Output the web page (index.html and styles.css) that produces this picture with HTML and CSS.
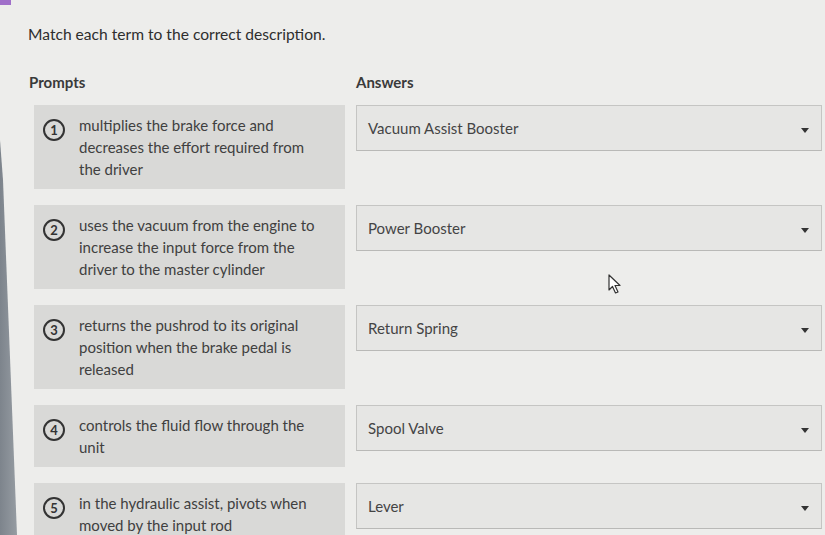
FILE: index.html
```html
<!DOCTYPE html>
<html lang="en">
  <head>
    <meta charset="UTF-8" />
    <meta name="viewport" content="width=device-width, initial-scale=1.0" />
    <title>Matching Question</title>
    <link rel="stylesheet" href="styles.css">
  </head>
  <body>
    <div class="tab-mark"></div>
    <div class="bezel"></div>

    <main class="quiz">
      <h1 class="question">Match each term to the correct description.</h1>

      <div class="match">
        <div class="col-head prompts-head">Prompts</div>
        <div class="col-head">Answers</div>

        <div class="prompt">
          <span class="num">1</span>
          <p>multiplies the brake force and decreases the effort required from the driver</p>
        </div>
        <div class="answer">
          <span>Vacuum Assist Booster</span>
          <i class="caret"></i>
        </div>

        <div class="prompt">
          <span class="num">2</span>
          <p>uses the vacuum from the engine to increase the input force from the driver to the master cylinder</p>
        </div>
        <div class="answer">
          <span>Power Booster</span>
          <i class="caret"></i>
        </div>

        <div class="prompt">
          <span class="num">3</span>
          <p>returns the pushrod to its original position when the brake pedal is released</p>
        </div>
        <div class="answer">
          <span>Return Spring</span>
          <i class="caret"></i>
        </div>

        <div class="prompt">
          <span class="num">4</span>
          <p>controls the fluid flow through the unit</p>
        </div>
        <div class="answer">
          <span>Spool Valve</span>
          <i class="caret"></i>
        </div>

        <div class="prompt">
          <span class="num">5</span>
          <p>in the hydraulic assist, pivots when moved by the input rod</p>
        </div>
        <div class="answer">
          <span>Lever</span>
          <i class="caret"></i>
        </div>
      </div>
    </main>

    <svg class="cursor" width="14" height="22" viewBox="0 0 14 22">
      <path d="M1 1 L1 16 L4.5 12.5 L7.5 19 L10 18 L7 11.5 L12 11.5 Z" fill="#fff" stroke="#333" stroke-width="1.2" stroke-linejoin="round" />
    </svg>
  </body>
</html>
```

FILE: styles.css
```css
body {
  margin: 0;
  padding: 24px 0 0 0;
  font-family: Lato, "Open Sans", sans-serif;
  color: #404040;
  background-color: #ededeb;
  height: 535px;
  overflow: hidden;
  box-sizing: border-box;
}

.tab-mark {
  position: absolute;
  top: 0;
  left: 0;
  width: 11px;
  height: 5px;
  background-color: #a06fc9;
}

.bezel {
  position: absolute;
  top: 0;
  left: 0;
  width: 20px;
  height: 535px;
  background: linear-gradient(to right, #7d848c, #9aa0a6);
  clip-path: polygon(0 140px, 3px 180px, 17px 535px, 0 535px);
}

.quiz {
  padding: 0 3px 0 28px;
}

.question {
  margin: 0 0 30px;
  font-size: 15.6px;
  line-height: 20px;
  font-weight: normal;
  color: #2e2e2e;
}

.match {
  display: grid;
  grid-template-columns: 311px 1fr;
  column-gap: 11px;
  row-gap: 16px;
  padding-left: 6px;
  align-items: start;
}

.col-head {
  font-size: 15px;
  line-height: 16px;
  font-weight: bold;
  color: #3a3a3a;
}

.match .col-head {
  margin-bottom: -1px;
}

.prompts-head {
  margin-left: -5px;
}

.prompt {
  display: flex;
  gap: 14px;
  padding: 9px 18px 9px 9px;
  background-color: #d9d9d7;
}

.prompt p {
  margin: 0;
  font-size: 15px;
  line-height: 22px;
}

.num {
  flex: none;
  width: 18px;
  height: 18px;
  margin-top: 5px;
  border: 2px solid #333;
  border-radius: 50%;
  font-size: 13px;
  font-weight: bold;
  line-height: 18px;
  text-align: center;
  color: #333;
}

.answer {
  display: flex;
  align-items: center;
  justify-content: space-between;
  height: 46px;
  padding: 0 12px 0 11px;
  box-sizing: border-box;
  background-color: #e6e6e4;
  border: 1px solid #c5c5c3;
  border-bottom-color: #b9b9b7;
  font-size: 15px;
  color: #444;
}

.caret {
  width: 0;
  height: 0;
  margin-top: 4px;
  border-left: 4px solid transparent;
  border-right: 4px solid transparent;
  border-top: 5px solid #333;
}

.cursor {
  position: absolute;
  left: 608px;
  top: 274px;
}
```
